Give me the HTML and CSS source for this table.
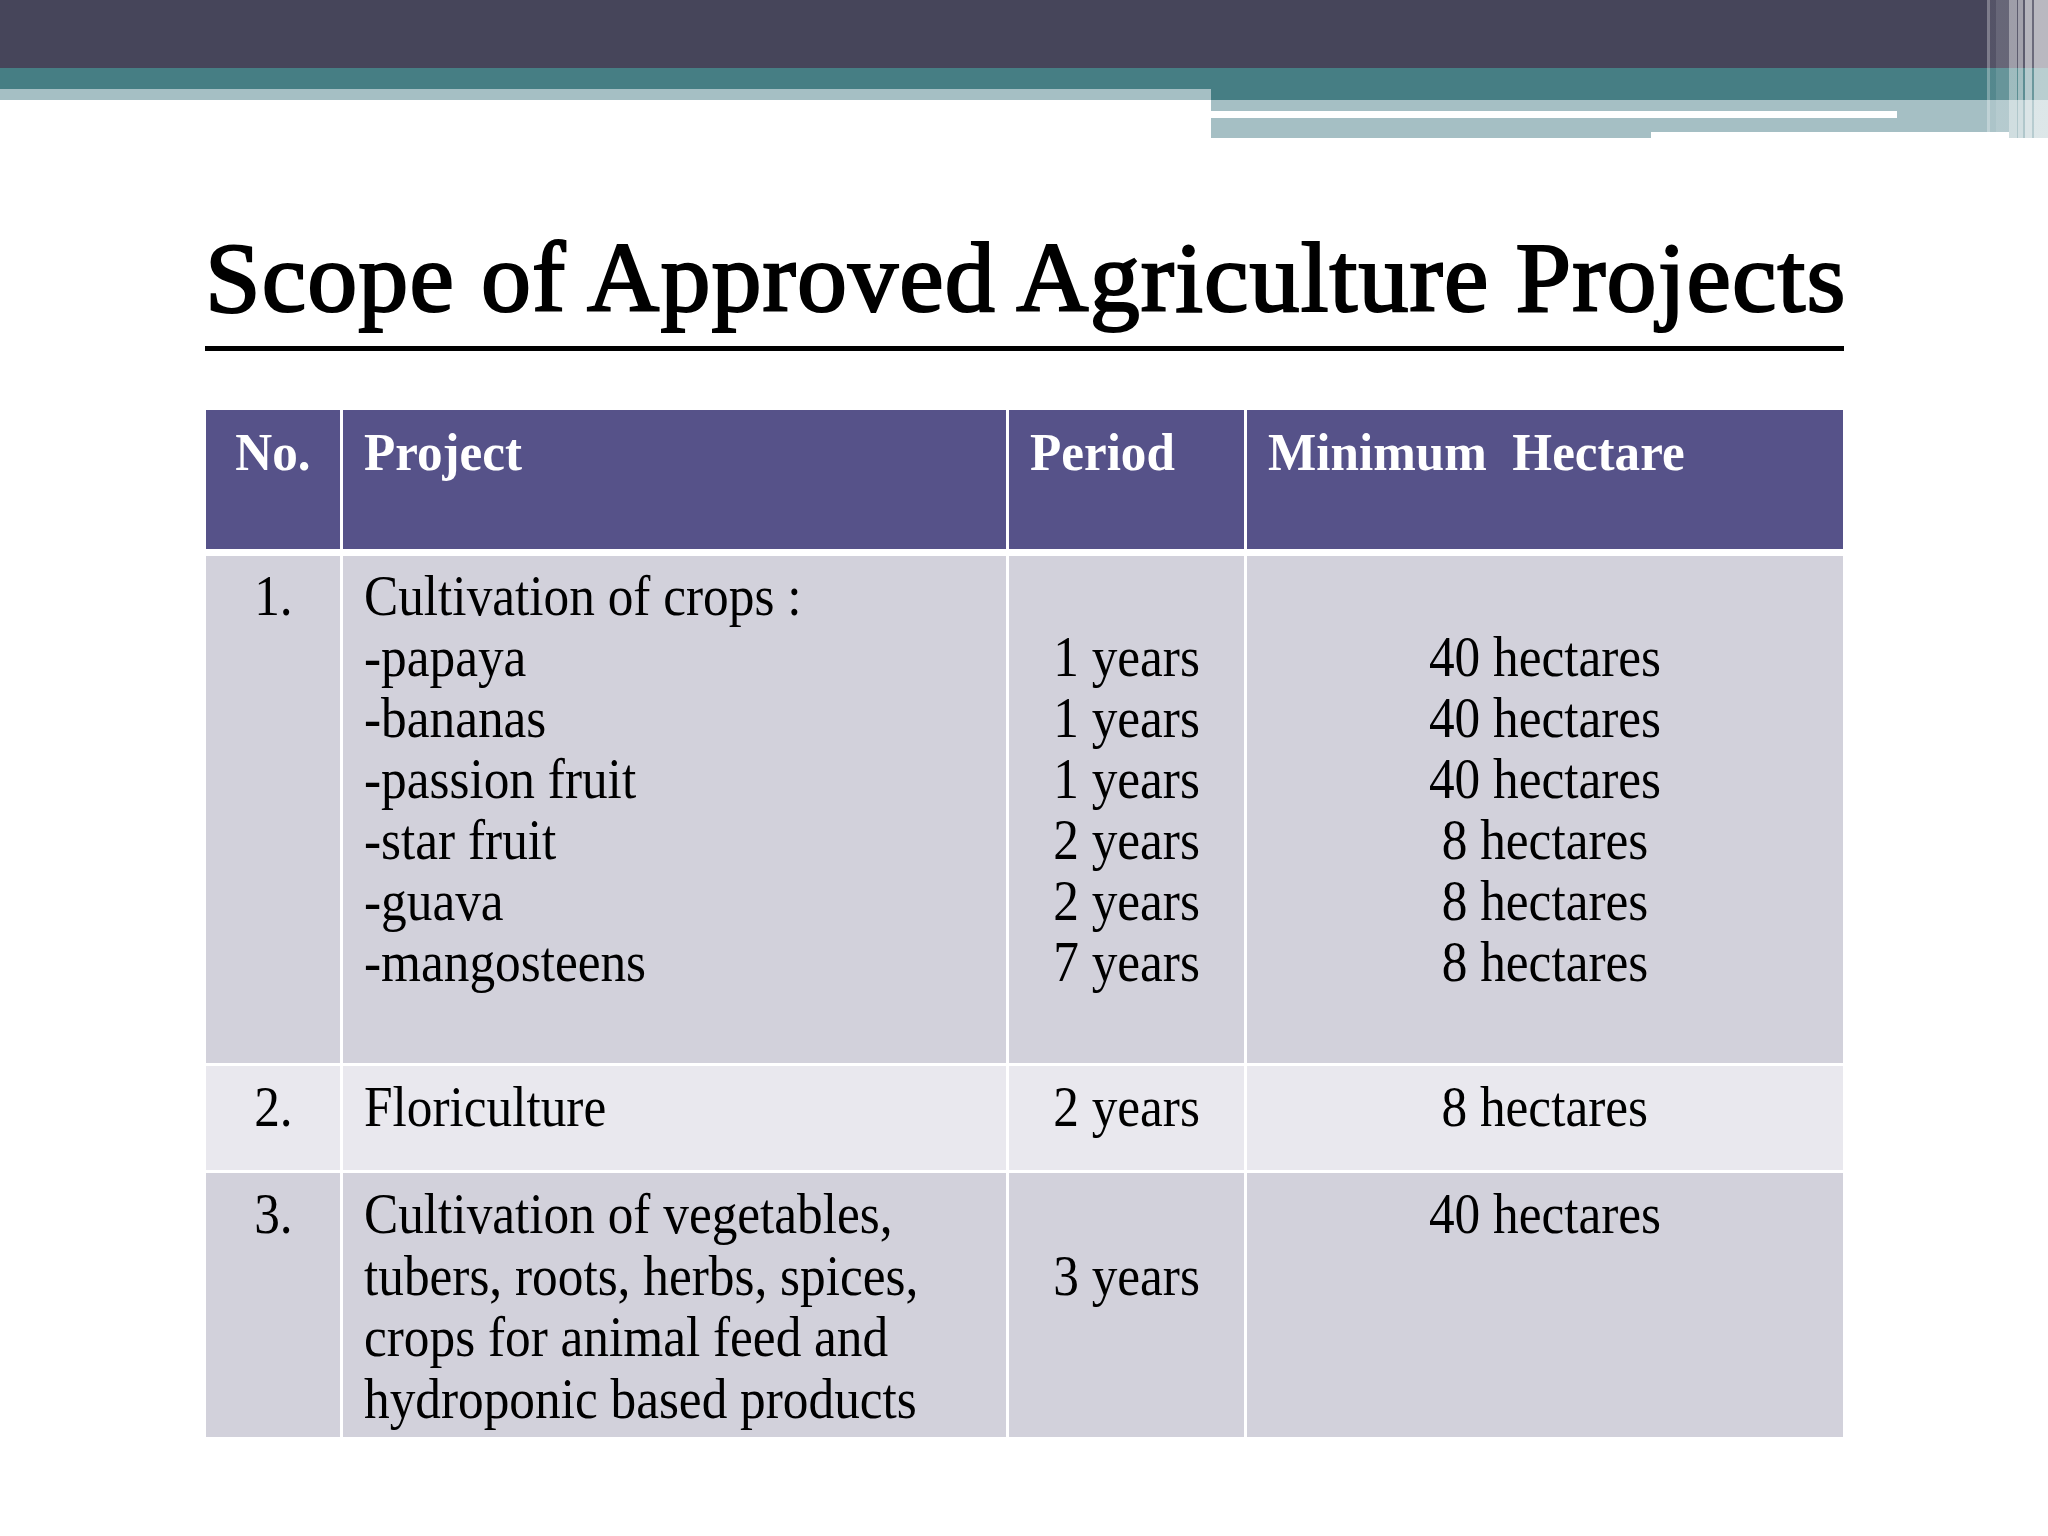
FILE: index.html
```html
<!DOCTYPE html>
<html>
<head>
<meta charset="utf-8">
<link rel="stylesheet" href="styles.css">
</head>
<body>
<div class="slide">
  <div class="topbar">
    <div class="band-dark"></div>
    <div class="band-row">
      <div class="band-left">
        <div class="teal-thin"></div>
        <div class="light-thin"></div>
      </div>
      <div class="band-right">
        <div class="teal-thick"></div>
        <div class="light-a"></div>
        <div class="white-line"></div>
        <div class="light-b"></div>
        <div class="light-c"><div class="white-rect"></div></div>
      </div>
    </div>
    <div class="stripes"></div>
  </div>

  <div class="content">
    <h1 class="title">Scope of Approved Agriculture Projects</h1>

    <table class="grid">
      <colgroup>
        <col class="c-no"><col class="c-proj"><col class="c-per"><col class="c-ha">
      </colgroup>
      <tr class="head">
        <th class="ctr"><div class="htxt">No.</div></th>
        <th><div class="htxt">Project</div></th>
        <th><div class="htxt">Period</div></th>
        <th><div class="htxt">Minimum&nbsp; Hectare</div></th>
      </tr>
      <tr class="r1 dark">
        <td class="ctr"><div class="txt">1.</div></td>
        <td><div class="txt">Cultivation of crops :<br>-papaya<br>-bananas<br>-passion fruit<br>-star fruit<br>-guava<br>-mangosteens</div></td>
        <td class="ctr"><div class="txt">&nbsp;<br>1 years<br>1 years<br>1 years<br>2 years<br>2 years<br>7 years</div></td>
        <td class="ctr"><div class="txt">&nbsp;<br>40 hectares<br>40 hectares<br>40 hectares<br>8 hectares<br>8 hectares<br>8 hectares</div></td>
      </tr>
      <tr class="r2 light">
        <td class="ctr"><div class="txt">2.</div></td>
        <td><div class="txt">Floriculture</div></td>
        <td class="ctr"><div class="txt">2 years</div></td>
        <td class="ctr"><div class="txt">8 hectares</div></td>
      </tr>
      <tr class="r3 dark">
        <td class="ctr"><div class="txt">3.</div></td>
        <td><div class="txt">Cultivation of vegetables,<br>tubers, roots, herbs, spices,<br>crops for animal feed and<br>hydroponic based products</div></td>
        <td class="ctr"><div class="txt">&nbsp;<br>3 years</div></td>
        <td class="ctr"><div class="txt">40 hectares</div></td>
      </tr>
    </table>
  </div>
</div>
</body>
</html>
```

FILE: styles.css
```css
html, body {
  margin: 0;
  padding: 0;
  background: #ffffff;
}

.slide {
  position: relative;
  width: 2048px;
  height: 1536px;
  overflow: hidden;
  background: #ffffff;
  font-family: "Liberation Serif", "Times New Roman", serif;
  color: #000000;
}

/* ---------- top decoration ---------- */
.topbar {
  position: relative;
  height: 138px;
}

.band-dark {
  height: 68px;
  background: #46455a;
}

.band-row {
  display: flex;
}

.band-left {
  width: 1211px;
}

.teal-thin {
  height: 21px;
  background: #467e84;
}

.light-thin {
  height: 11px;
  background: #a5bfc4;
}

.band-right {
  flex: 1;
}

.teal-thick {
  height: 32px;
  background: #467e84;
}

.light-a {
  height: 11px;
  background: #a5bfc4;
}

.white-line {
  height: 7px;
  background: linear-gradient(to right, #ffffff 0, #ffffff 686px, #a5bfc4 686px);
}

.light-b {
  height: 14px;
  background: #a5bfc4;
}

.light-c {
  height: 6px;
  background: #a5bfc4;
  display: flex;
}

.white-rect {
  margin-left: 440px;
  width: 358px;
  background: #ffffff;
}

.stripes {
  position: absolute;
  top: 0;
  left: 1987px;
  width: 61px;
  height: 138px;
  background: linear-gradient(to right,
    rgba(255,255,255,0.30) 0, rgba(255,255,255,0.30) 3px,
    rgba(255,255,255,0.08) 3px, rgba(255,255,255,0.08) 9px,
    rgba(255,255,255,0.18) 9px, rgba(255,255,255,0.18) 22px,
    rgba(255,255,255,0.48) 22px, rgba(255,255,255,0.48) 30px,
    rgba(255,255,255,0.12) 30px, rgba(255,255,255,0.12) 31px,
    rgba(255,255,255,0.50) 31px, rgba(255,255,255,0.50) 36px,
    rgba(255,255,255,0.12) 36px, rgba(255,255,255,0.12) 38px,
    rgba(255,255,255,0.60) 38px, rgba(255,255,255,0.60) 45px,
    rgba(255,255,255,0.20) 45px, rgba(255,255,255,0.20) 47px,
    rgba(255,255,255,0.62) 47px, rgba(255,255,255,0.62) 61px);
}

/* ---------- content ---------- */
.content {
  padding-left: 205px;
}

.title {
  margin: 90px 0 0 0;
  width: 1639px;
  font-size: 100px;
  line-height: 100px;
  font-weight: normal;
  letter-spacing: 1.1px;
  -webkit-text-stroke: 2.2px #000;
  white-space: nowrap;
  padding-bottom: 18px;
  border-bottom: 5px solid #000;
}

.grid {
  margin: 56px 0 0 -2px;
  border-collapse: separate;
  border-spacing: 3px;
  table-layout: fixed;
  width: 1643px;
}

.c-no { width: 134px; }
.c-proj { width: 663px; }
.c-per { width: 235px; }
.c-ha { width: 596px; }

.grid th, .grid td {
  vertical-align: top;
  text-align: left;
  padding: 0 0 0 21px;
  overflow: visible;
  white-space: nowrap;
}

.grid .ctr {
  text-align: center;
  padding-left: 0;
}

.head th {
  background: #565289;
  color: #ffffff;
  font-weight: bold;
  font-size: 53px;
  line-height: 60px;
  padding-top: 12px;
  border-bottom: 4px solid #ffffff;
}

.head { height: 143px; }

.htxt {
  display: inline-block;
  transform: scaleX(0.965);
  transform-origin: left top;
}

.ctr .htxt { transform-origin: center top; }

.grid td {
  font-size: 57px;
  line-height: 61.5px;
  padding-top: 10px;
}

.r1 td {
  line-height: 61px;
  padding-top: 9px;
}

.dark td { background: #d2d1db; }
.light td { background: #e9e8ee; }

.r1 { height: 507px; }
.r2 { height: 104px; }
.r3 { height: 264px; }

.txt {
  display: inline-block;
  text-align: left;
  transform: scaleX(0.9);
  transform-origin: left top;
}

.ctr .txt {
  text-align: center;
  transform-origin: center top;
}
```
